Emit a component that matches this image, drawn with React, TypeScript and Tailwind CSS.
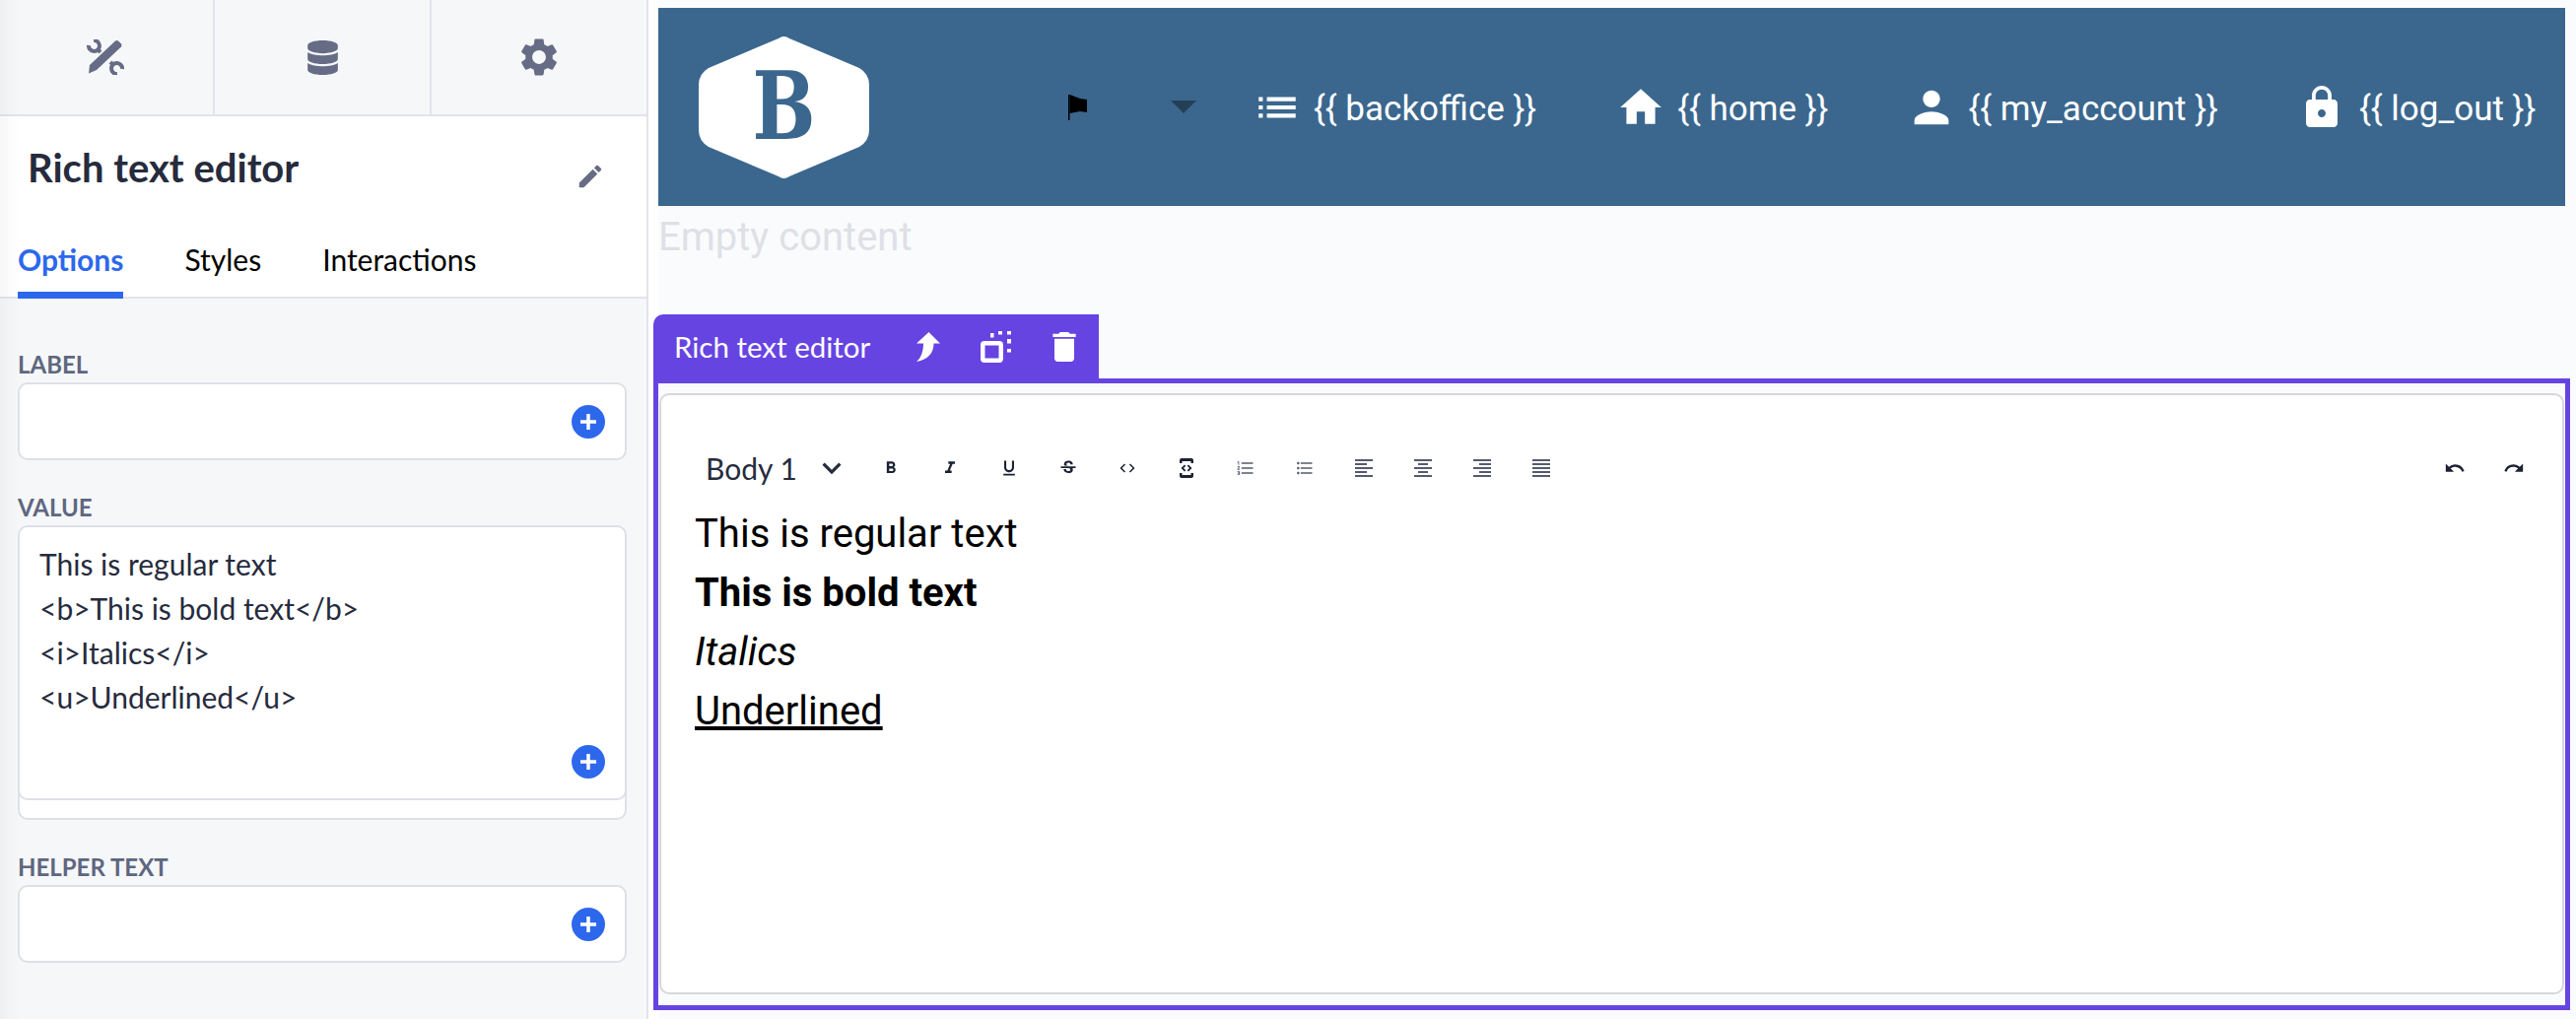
import {
  MdDelete,
  MdEdit,
  MdFormatAlignCenter,
  MdFormatAlignJustify,
  MdFormatAlignLeft,
  MdFormatAlignRight,
  MdFormatBold,
  MdFormatItalic,
  MdFormatListBulleted,
  MdFormatListNumbered,
  MdStrikethroughS,
  MdFormatUnderlined,
  MdCode,
  MdHome,
  MdKeyboardArrowDown,
  MdList,
  MdLock,
  MdPerson,
  MdRedo,
  MdSettings,
  MdUndo,
} from "react-icons/md";
import { FaDatabase } from "react-icons/fa";

const lato = "font-['Lato','Noto_Sans',sans-serif]";
const roboto = "font-['Roboto','Liberation_Sans',sans-serif]";

const PlusButton = () => (
  <span className="flex h-[34px] w-[34px] items-center justify-center rounded-full bg-[#2d68ec]">
    <svg viewBox="0 0 16 16" className="h-4 w-4 stroke-white stroke-[3.5]">
      <path d="M8 0v16M0 8h16" />
    </svg>
  </span>
);

const ToolsIcon = () => (
  <svg viewBox="0 0 38 36" className="h-9 w-[38px]">
    <path d="M29 1.500Q30.500.5 32 1.500L35 4.500Q36 6 35 7.500L10 31 2 34.500 3 26z" className="fill-[#666c85]" />
    <path d="M2 6A5.500 5.500 0 1 0 7 1M11 10l3 3M36 30A5.500 5.500 0 1 0 31 35M27 26l-3-3" className="fill-none stroke-[#666c85] stroke-[4]" />
  </svg>
);

const UpArrowIcon = () => (
  <svg viewBox="0 0 24 30" className="h-[30px] w-6 shrink-0 fill-white">
    <path d="M12.500 0L24 11.500h-6.500C17.500 21 12 28 0 30c5-4 7-11 7-18.500H0z" />
  </svg>
);

const DuplicateIcon = () => (
  <svg viewBox="0 0 31 32" className="ml-[41px] h-8 w-[31px] shrink-0 fill-white">
    <path d="M4 10h15a4 4 0 014 4v14a4 4 0 01-4 4H4a4 4 0 01-4-4V14a4 4 0 014-4zm.500 4.500v13h14v-13z" fillRule="evenodd" />
    <path d="M10 2h3.500v4.500H10zM18 0h4v3.500h-4zM27 0h4v3.500h-4zM27 8h4v4.500h-4zM27 18h4v3.500h-4z" />
  </svg>
);

const CodeBlockIcon = () => (
  <svg viewBox="0 0 14 20" className="h-5 w-[14px] fill-[#1c2233]">
    <path d="M2 0h10a2 2 0 012 2v3h-2.500V3h-9v2H0V2a2 2 0 012-2zM0 15h2.500v2h9v-2H14v3a2 2 0 01-2 2H2a2 2 0 01-2-2z" />
    <path d="M5 6.500l1.300 1.300L4 10l2.300 2.200L5 13.500 1.500 10zM9 6.500L7.700 7.800 10 10l-2.300 2.200L9 13.500l3.500-3.500z" />
  </svg>
);

const Field = ({ label, children }: { label: string; children?: React.ReactNode }) => (
  <div className="flex flex-col">
    <span className="mb-[8px] h-[22px] text-[24px] leading-[24px] font-bold text-[#5e6780] uppercase">
      {label}
    </span>
    {children ?? (
      <div className="flex h-[79px] items-center justify-end rounded-[10px] border-2 border-[#dfe0e6] bg-white pr-[20px]">
        <PlusButton />
      </div>
    )}
  </div>
);

const Sidebar = () => (
  <aside className={`relative flex h-full w-[658px] shrink-0 flex-col border-r-2 border-[#e3e4e9] ${lato}`}>
    <div className="pointer-events-none absolute inset-y-0 left-0 w-[20px] bg-gradient-to-r from-black/[0.03] to-transparent" />
    <div className="flex h-[118px] shrink-0 border-b-2 border-[#e3e4e9] bg-[#f6f7f9]">
      <div className="flex w-[218px] items-center justify-center border-r-2 border-[#e3e4e9] pr-[2px]">
        <ToolsIcon />
      </div>
      <div className="flex w-[220px] items-center justify-center border-r-2 border-[#e3e4e9]">
        <FaDatabase className="h-[35px] w-[33px] text-[#666c85]" />
      </div>
      <div className="flex flex-1 items-center justify-center">
        <MdSettings className="h-[46px] w-[46px] text-[#666c85]" />
      </div>
    </div>
    <div className="flex h-[185px] shrink-0 flex-col border-b-2 border-[#e3e4e9] bg-white">
      <div className="flex h-[104px] shrink-0 items-center justify-between pr-[42px] pl-[28px]">
        <h1 className="text-[40px] leading-none font-bold text-[#262b3d]">Rich text editor</h1>
        <MdEdit className="mt-[18px] h-[30px] w-[30px] text-[#666c85]" />
      </div>
      <div className="flex gap-[62px] pt-[24px] pl-[18px] text-[30px] leading-[34px] text-black">
        <span className="h-[57px] border-b-[7px] border-[#2d68ec] font-bold text-[#2d68ec]">
          Options
        </span>
        <span>Styles</span>
        <span>Interactions</span>
      </div>
    </div>
    <div className="flex flex-1 flex-col gap-[36px] overflow-hidden bg-[#f6f7f9] pt-[55px] pr-[20px] pl-[18px]">
      <Field label="Label" />
      <Field label="Value">
        <div className="relative h-[299px] shrink-0">
          <div className="absolute inset-x-0 bottom-0 h-[60px] rounded-[10px] border-2 border-[#dfe0e6] bg-white" />
          <div className="absolute inset-x-0 top-0 flex h-[279px] flex-col rounded-[10px] border-2 border-[#dfe0e6] bg-white pt-[15px] pr-[20px] pl-[20px] text-[30px] leading-[45px] text-[#262b3d]">
            <span>This is regular text</span>
            <span>{"<b>This is bold text</b>"}</span>
            <span>{"<i>Italics</i>"}</span>
            <span>{"<u>Underlined</u>"}</span>
            <span className="absolute right-[20px] bottom-[20px]">
              <PlusButton />
            </span>
          </div>
        </div>
      </Field>
      <Field label="Helper text" />
    </div>
  </aside>
);

const NavText = ({ label, className }: { label: string; className: string }) => (
  <span className={`mt-[4px] text-[35px] leading-none whitespace-nowrap text-white ${className}`}>{label}</span>
);

const Header = () => (
  <header className={`flex h-[201px] shrink-0 items-center bg-[#3b678e] pl-[41px] text-white ${roboto}`}>
    <svg viewBox="0 0 173 146" className="h-[146px] w-[173px] shrink-0">
      <path
        d="M81 3Q86.500-1 92 3L163 33Q173 39 173 50V96Q173 107 163 113L92 143Q86.500 147 81 143L10 113Q0 107 0 96V50Q0 39 10 33Z"
        fill="#fff"
      />
      <text
        x="86.500"
        y="105"
        textAnchor="middle"
        fontFamily="DejaVu Serif"
        fontWeight="700"
        fontSize="96"
        textLength="64"
        lengthAdjust="spacingAndGlyphs"
        fill="#3b678e"
      >
        B
      </text>
    </svg>
    <svg viewBox="0 0 20 26" className="ml-[202px] h-[26px] w-5 shrink-0 fill-black">
      <path d="M0 0h1.500v26H0z" />
      <path d="M1.500 0L12 4l7 1v13l-7-1-10.500 2z" />
    </svg>
    <span className="ml-[84px] h-0 w-0 shrink-0 border-x-[13px] border-t-[13px] border-x-transparent border-t-[#233f55]" />
    <MdList className="ml-[57px] h-[50px] w-[50px] shrink-0" />
    <NavText label="{{ backoffice }}" className="ml-[12px]" />
    <MdHome className="ml-[81px] h-[50px] w-[50px] shrink-0" />
    <NavText label="{{ home }}" className="ml-[12px]" />
    <MdPerson className="ml-[79px] h-[52px] w-[52px] shrink-0" />
    <NavText label="{{ my_account }}" className="ml-[11px]" />
    <MdLock className="ml-[81px] h-[48px] w-[48px] shrink-0" />
    <NavText label="{{ log_out }}" className="ml-[14px]" />
  </header>
);

const toolIcons = [
  <MdFormatBold key="b" className="h-5 w-5" />,
  <MdFormatItalic key="i" className="h-5 w-5" />,
  <MdFormatUnderlined key="u" className="h-5 w-5" />,
  <MdStrikethroughS key="s" className="h-5 w-5" />,
  <MdCode key="c" className="h-[18px] w-[18px]" />,
  <CodeBlockIcon key="cb" />,
  <MdFormatListNumbered key="ol" className="h-5 w-5 text-[#555b6c]" />,
  <MdFormatListBulleted key="ul" className="h-5 w-5 text-[#555b6c]" />,
  <MdFormatAlignLeft key="al" className="h-6 w-6 text-[#555b6c]" />,
  <MdFormatAlignCenter key="ac" className="h-6 w-6 text-[#555b6c]" />,
  <MdFormatAlignRight key="ar" className="h-6 w-6 text-[#555b6c]" />,
  <MdFormatAlignJustify key="aj" className="h-6 w-6 text-[#555b6c]" />,
];

const Editor = () => (
  <div className="-mx-[5px] flex flex-1 flex-col">
    <div className={`flex h-[65px] w-[452px] shrink-0 items-center rounded-tl-[10px] bg-[#6644e2] pl-[21px] text-white ${lato}`}>
      <span className="w-[199px] shrink-0 pt-px text-[29.5px] leading-none whitespace-nowrap">Rich text editor</span>
      <span className="ml-[47px] flex w-6 justify-center">
        <UpArrowIcon />
      </span>
      <DuplicateIcon />
      <MdDelete className="ml-[34px] h-[40px] w-[40px] shrink-0" />
    </div>
    <div className="h-[641px] border-[5px] border-[#6644e2] pt-[10px] pr-px pb-[11px] pl-px">
      <div className="flex h-full flex-col rounded-[10px] border-2 border-[#d6d7da] bg-white pt-[49px] pr-[19px] pl-[34px]">
        <div className="flex h-[50px] items-center text-[#1c2233]">
          <span className={`ml-[11px] w-[89px] text-[30px] leading-none whitespace-nowrap text-[#262b3d] ${lato}`}>Body 1</span>
          <MdKeyboardArrowDown className="ml-[20px] h-[38px] w-[38px] text-[#262b3d]" />
          <span className="ml-[11px] flex">
            {toolIcons.map((icon, index) => (
              <span key={index} className="flex w-[60px] items-center justify-center">
                {icon}
              </span>
            ))}
          </span>
          <span className="ml-auto flex">
            <span className="flex w-[60px] items-center justify-center">
              <MdUndo className="h-[22px] w-[22px]" />
            </span>
            <span className="flex w-[60px] items-center justify-center">
              <MdRedo className="h-[22px] w-[22px]" />
            </span>
          </span>
        </div>
        <div className={`mt-[12px] flex flex-col text-[40px] leading-[60px] text-black ${roboto}`}>
          <span>This is regular text</span>
          <b>This is bold text</b>
          <i>Italics</i>
          <u>Underlined</u>
        </div>
      </div>
    </div>
  </div>
);

export default function App() {
  return (
    <div className="flex h-screen overflow-hidden bg-white">
      <Sidebar />
      <main className="ml-[10px] flex h-full min-w-0 flex-1 flex-col bg-[#fafbfd]">
        <div className="mr-[11px] flex h-full flex-col pt-[8px]">
          <Header />
          <p className={`mt-[12px] h-[98px] shrink-0 text-[40px] leading-[40px] text-[#dfe0e6] ${roboto}`}>Empty content</p>
          <Editor />
        </div>
      </main>
    </div>
  );
}
